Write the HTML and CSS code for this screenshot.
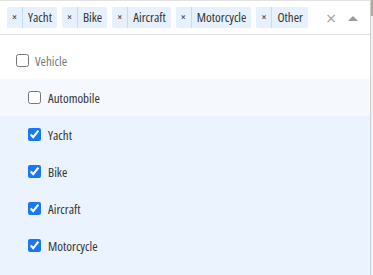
FILE: index.html
```html
<!DOCTYPE html>
<html>
<head>
<meta charset="utf-8">
<link rel="stylesheet" href="styles.css">
</head>
<body>
<div class="page">
  <div class="select">
    <div class="control">
      <div class="chips">
        <span class="chip"><span class="chip-x">×</span><span class="chip-label">Yacht</span></span>
        <span class="chip"><span class="chip-x">×</span><span class="chip-label">Bike</span></span>
        <span class="chip"><span class="chip-x">×</span><span class="chip-label">Aircraft</span></span>
        <span class="chip"><span class="chip-x">×</span><span class="chip-label">Motorcycle</span></span>
        <span class="chip"><span class="chip-x">×</span><span class="chip-label">Other</span></span>
      </div>
      <span class="clear">×</span>
      <span class="arrow"></span>
    </div>
    <div class="menu">
      <label class="option parent"><input type="checkbox"><span>Vehicle</span></label>
      <label class="option child hover"><input type="checkbox"><span>Automobile</span></label>
      <label class="option child selected"><input type="checkbox" checked><span>Yacht</span></label>
      <label class="option child selected"><input type="checkbox" checked><span>Bike</span></label>
      <label class="option child selected"><input type="checkbox" checked><span>Aircraft</span></label>
      <label class="option child selected"><input type="checkbox" checked><span>Motorcycle</span></label>
      <div class="rest"></div>
    </div>
  </div>
  <div class="edge"><div class="edge-top"></div></div>
</div>
</body>
</html>
```

FILE: styles.css
```css
html, body {
  margin: 0;
  padding: 0;
  background: #ffffff;
}
body {
  font-family: "Open Sans", sans-serif;
  font-stretch: 75%;
  font-size: 13px;
  color: #333333;
}
.page {
  display: flex;
  width: 373px;
  height: 275px;
  overflow: hidden;
}
.select {
  width: 371px;
  border-right: 1px solid #cfcfcf;
  border-top: 1px solid #e2e2e2;
  box-sizing: border-box;
  flex: none;
  overflow: hidden;
  display: flex;
  flex-direction: column;
}
.edge {
  flex: 1;
  background: #f2f2f2;
}
.edge-top {
  height: 16px;
  background: #b3a98e;
}
.control {
  height: 34px;
  flex: none;
  box-sizing: border-box;
  border-bottom: 1px solid #e0e0e0;
  display: flex;
  align-items: center;
  padding: 0 0 0 7px;
}
.chips {
  display: flex;
  gap: 5px;
  flex: 1;
}
.chip {
  display: flex;
  align-items: stretch;
  height: 21px;
  background: #e7f1fd;
  border-radius: 2px;
  line-height: 21px;
}
.chip-x {
  width: 15px;
  text-align: center;
  font-size: 10px;
  font-weight: 600;
  color: #555;
  border-right: 1px solid #c4dbf6;
}
.chip-label {
  padding: 0 5px;
}
.clear {
  font-family: "DejaVu Sans", sans-serif;
  font-stretch: normal;
  font-size: 14px;
  color: #a0a0a0;
  width: 14px;
  text-align: center;
  margin-right: 10px;
  line-height: 1;
}
.arrow {
  width: 0;
  height: 0;
  border-left: 5px solid transparent;
  border-right: 5px solid transparent;
  border-bottom: 5px solid #999;
  margin-right: 12px;
  margin-top: 1px;
}
.menu {
  padding-top: 7px;
  flex: 1;
  display: flex;
  flex-direction: column;
}
.option {
  display: flex;
  align-items: center;
  height: 37px;
  flex: none;
  gap: 6px;
}
.option input {
  margin: 0;
  width: 13px;
  height: 13px;
  accent-color: #1877f2;
}
.parent {
  padding-left: 16px;
  color: #777;
}
.child {
  padding-left: 28px;
  gap: 7px;
}
.hover {
  background: #f5f9fe;
}
.selected {
  background: #ebf4fe;
}
.rest {
  flex: 1;
  background: #ebf4fe;
}
```
